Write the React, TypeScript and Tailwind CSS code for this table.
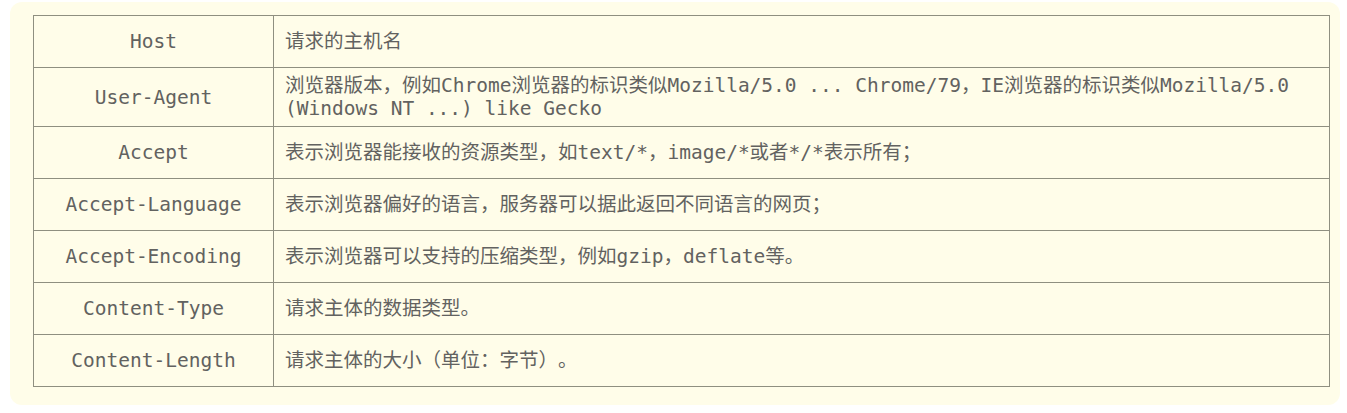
import React from 'react';

interface HeaderRow {
  name: string;
  desc: string;
}

const rows: HeaderRow[] = [
  { name: 'Host', desc: '请求的主机名' },
  {
    name: 'User-Agent',
    desc: '浏览器版本，例如Chrome浏览器的标识类似Mozilla/5.0 ... Chrome/79，IE浏览器的标识类似Mozilla/5.0 (Windows NT ...) like Gecko',
  },
  { name: 'Accept', desc: '表示浏览器能接收的资源类型，如text/*，image/*或者*/*表示所有；' },
  { name: 'Accept-Language', desc: '表示浏览器偏好的语言，服务器可以据此返回不同语言的网页；' },
  { name: 'Accept-Encoding', desc: '表示浏览器可以支持的压缩类型，例如gzip，deflate等。' },
  { name: 'Content-Type', desc: '请求主体的数据类型。' },
  { name: 'Content-Length', desc: '请求主体的大小（单位：字节）。' },
];

const mono = { fontFamily: '"DejaVu Sans Mono", "Noto Sans CJK SC", monospace' };

export default function App() {
  return (
    <div className="bg-white w-[1347px] h-[413px] pl-[10px] pt-[2px]">
      <div className="w-[1330px] h-[403px] bg-[#fffde9] rounded-[12px] pl-[23px] pt-[13px]">
        <table
          className="border-collapse w-[1297px] text-[19.5px] leading-[23px] text-[#626260] [text-spacing-trim:space-all]"
          style={mono}
        >
          <colgroup>
            <col className="w-[240px]" />
            <col />
          </colgroup>
          <tbody>
            {rows.map((row) => (
              <tr key={row.name}>
                <td className="border border-[#8f8f80] h-[52px] py-[6px] text-center align-middle">
                  {row.name}
                </td>
                <td className="border border-[#8f8f80] h-[52px] py-[6px] pl-[11px] pr-[8px] align-middle">
                  {row.desc}
                </td>
              </tr>
            ))}
          </tbody>
        </table>
      </div>
    </div>
  );
}
